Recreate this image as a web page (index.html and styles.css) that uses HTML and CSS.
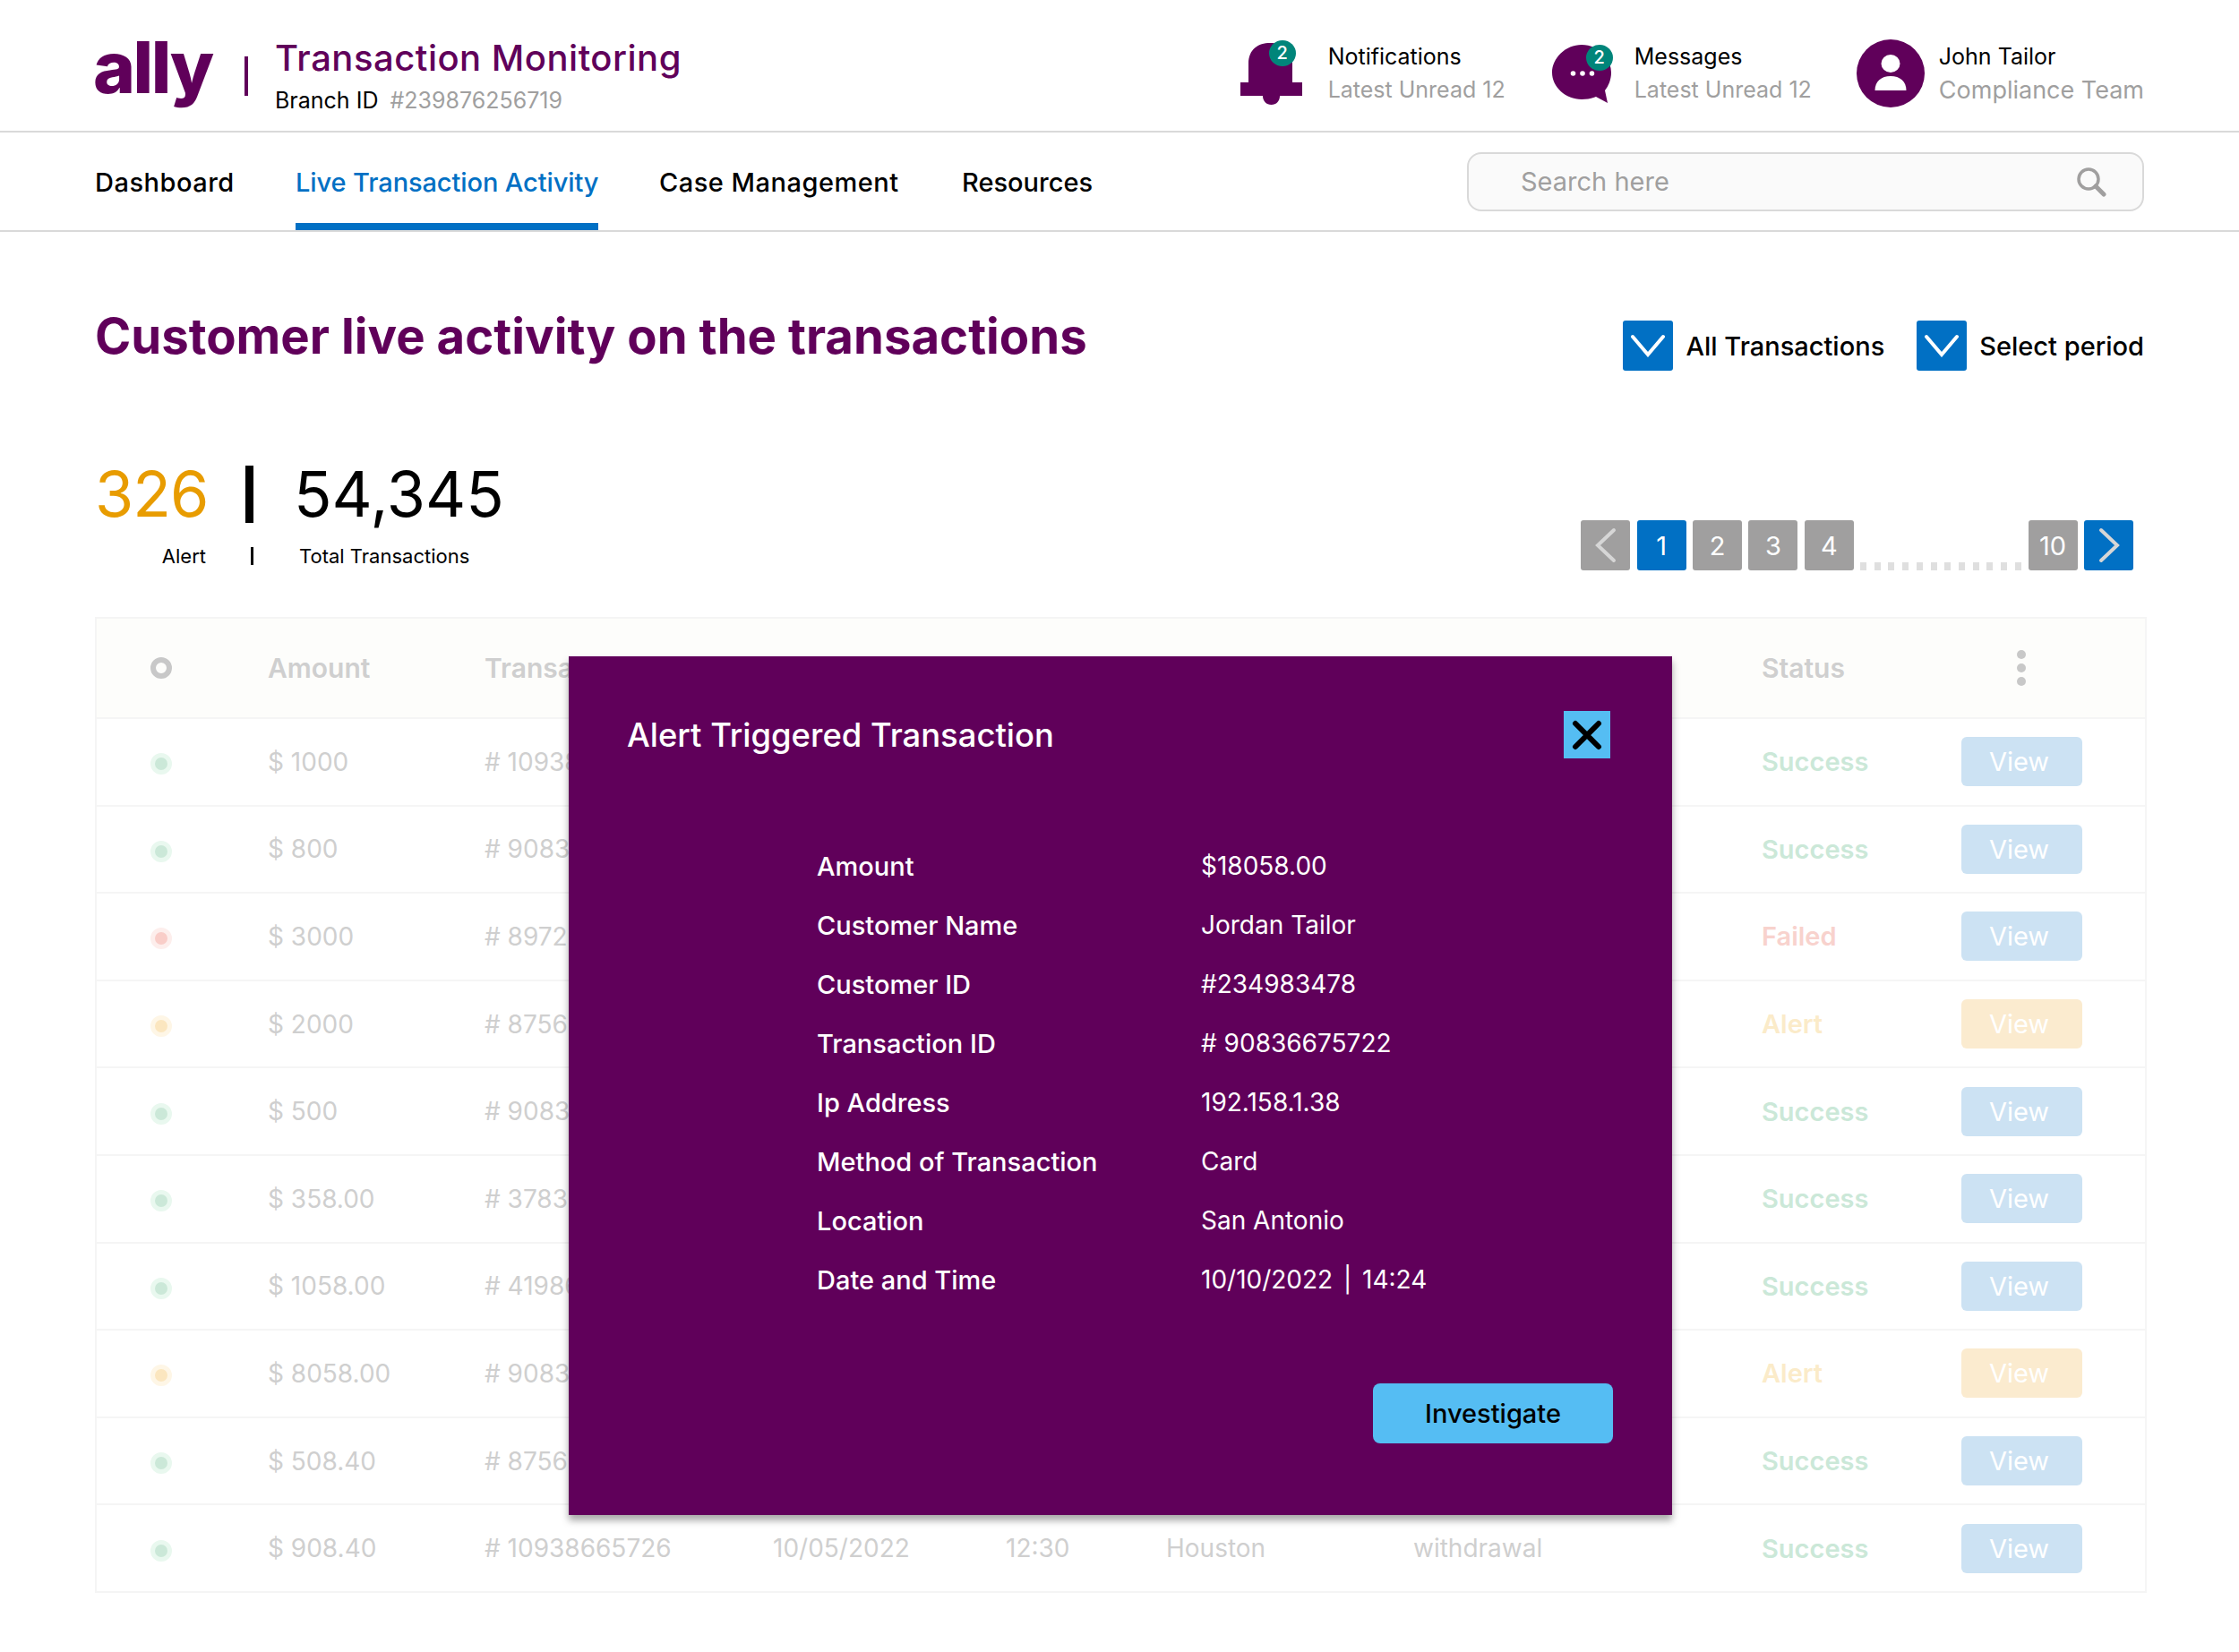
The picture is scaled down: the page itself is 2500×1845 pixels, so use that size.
FILE: index.html
```html
<!DOCTYPE html>
<html>
  <head>
    <meta charset="utf-8" />
    <title>Transaction Monitoring</title>
    <link rel="stylesheet" href="styles.css">
  </head>
  <body>
    <header class="topbar">
      <div class="brand">
        <span class="logo">ally</span>
        <span class="brand-rule"></span>
        <div>
          <div class="brand-title">Transaction Monitoring</div>
          <div class="brand-sub">Branch ID <span class="muted">#239876256719</span></div>
        </div>
      </div>
      <div class="top-items">
        <div class="top-item item-bell">
          <div class="top-icon">
            <svg width="69" height="70" viewBox="0 0 69 70"><path d="M9 45V24C9 8 20 1 33 1s25 7 25 23v21h11v15H0V45z" fill="#60005a"/><path d="M25 60h19c0 6-4 10-9.500 10S25 66 25 60z" fill="#60005a"/></svg>
            <span class="count count-bell">2</span>
          </div>
          <div class="top-text"><div>Notifications</div><div class="muted">Latest Unread 12</div></div>
        </div>
        <div class="top-item item-msg">
          <div class="top-icon">
            <svg width="66" height="65" viewBox="0 0 66 65"><path d="M33 0c18 0 33 14 33 31 0 8-3 15-7 20l3 14-13-7c-5 2-10 3-16 3C15 61 0 47 0 31S15 0 33 0z" fill="#60005a"/><circle cx="23.500" cy="32" r="2.800" fill="#fff"/><circle cx="34" cy="32" r="2.800" fill="#fff"/><circle cx="44.500" cy="32" r="2.800" fill="#fff"/></svg>
            <span class="count count-msg">2</span>
          </div>
          <div class="top-text"><div>Messages</div><div class="muted">Latest Unread 12</div></div>
        </div>
        <div class="top-item item-user">
          <svg width="76" height="76" viewBox="0 0 76 76"><circle cx="38" cy="38" r="38" fill="#60005a"/><ellipse cx="38" cy="27" rx="10.500" ry="10" fill="#fff"/><path d="M20.500 57c0-10 7-16 17.500-16s17.500 6 17.500 16z" fill="#fff"/></svg>
          <div class="top-text"><div>John Tailor</div><div class="muted team">Compliance Team</div></div>
        </div>
      </div>
    </header>

    <nav class="navbar">
      <div class="tabs">
        <a>Dashboard</a>
        <a class="active">Live Transaction Activity</a>
        <a>Case Management</a>
        <a>Resources</a>
      </div>
      <div class="search">
        <span>Search here</span>
        <svg width="34" height="34" viewBox="0 0 34 34" fill="none" stroke="#a09f9f" stroke-width="3.500"><circle cx="14" cy="14" r="11"/><path d="M22 22l9 9" stroke-linecap="round" stroke-width="5"/></svg>
      </div>
    </nav>

    <main class="content">
      <div class="title-row">
        <h1>Customer live activity on the transactions</h1>
        <div class="filters">
          <div class="filter">
            <span class="drop"><svg width="38" height="26" viewBox="0 0 38 26" fill="none" stroke="#fff" stroke-width="4" stroke-linecap="round"><path d="M2 3l17 20L36 3"/></svg></span>
            All Transactions
          </div>
          <div class="filter">
            <span class="drop"><svg width="38" height="26" viewBox="0 0 38 26" fill="none" stroke="#fff" stroke-width="4" stroke-linecap="round"><path d="M2 3l17 20L36 3"/></svg></span>
            Select period
          </div>
        </div>
      </div>

      <div class="stats-row">
        <div class="stats">
          <div class="stat-numbers">
            <span class="num-alert">326</span>
            <span class="num-rule"></span>
            <span class="num-total">54,345</span>
          </div>
          <div class="stat-labels">
            <span class="lab-alert">Alert</span>
            <span class="lab-rule"></span>
            <span class="lab-total">Total Transactions</span>
          </div>
        </div>
        <div class="pager">
          <span class="page"><svg width="26" height="40" viewBox="0 0 26 40" fill="none" stroke="#d6d6d6" stroke-width="4" stroke-linecap="round"><path d="M22 3L4 20l18 17"/></svg></span>
          <span class="page current">1</span>
          <span class="page">2</span>
          <span class="page">3</span>
          <span class="page">4</span>
          <span class="dots"></span>
          <span class="page">10</span>
          <span class="page current"><svg width="26" height="40" viewBox="0 0 26 40" fill="none" stroke="#d6d6d6" stroke-width="4" stroke-linecap="round"><path d="M4 3l18 17L4 37"/></svg></span>
        </div>
      </div>

      <table class="grid">
        <thead>
          <tr>
            <th class="c-dot"><span class="ring"></span></th>
            <th class="c-amount">Amount</th>
            <th class="c-id">Transaction ID</th>
            <th class="c-date"></th>
            <th class="c-time"></th>
            <th class="c-loc"></th>
            <th class="c-type"></th>
            <th class="c-status">Status</th>
            <th class="c-view"><span class="kebab"><i></i><i></i><i></i></span></th>
          </tr>
        </thead>
        <tbody>
          <tr><td><span class="dot ok"></span></td><td>$ 1000</td><td># 10938665726</td><td></td><td></td><td></td><td></td><td class="st-ok">Success</td><td><span class="view">View</span></td></tr>
          <tr><td><span class="dot ok"></span></td><td>$ 800</td><td># 90836675722</td><td></td><td></td><td></td><td></td><td class="st-ok">Success</td><td><span class="view">View</span></td></tr>
          <tr><td><span class="dot bad"></span></td><td>$ 3000</td><td># 89726675722</td><td></td><td></td><td></td><td></td><td class="st-bad">Failed</td><td><span class="view">View</span></td></tr>
          <tr><td><span class="dot warn"></span></td><td>$ 2000</td><td># 87566675722</td><td></td><td></td><td></td><td></td><td class="st-warn">Alert</td><td><span class="view view-warn">View</span></td></tr>
          <tr><td><span class="dot ok"></span></td><td>$ 500</td><td># 90836675722</td><td></td><td></td><td></td><td></td><td class="st-ok">Success</td><td><span class="view">View</span></td></tr>
          <tr><td><span class="dot ok"></span></td><td>$ 358.00</td><td># 37836675722</td><td></td><td></td><td></td><td></td><td class="st-ok">Success</td><td><span class="view">View</span></td></tr>
          <tr><td><span class="dot ok"></span></td><td>$ 1058.00</td><td># 41986675722</td><td></td><td></td><td></td><td></td><td class="st-ok">Success</td><td><span class="view">View</span></td></tr>
          <tr><td><span class="dot warn"></span></td><td>$ 8058.00</td><td># 90836675722</td><td></td><td></td><td></td><td></td><td class="st-warn">Alert</td><td><span class="view view-warn">View</span></td></tr>
          <tr><td><span class="dot ok"></span></td><td>$ 508.40</td><td># 87566675722</td><td></td><td></td><td></td><td></td><td class="st-ok">Success</td><td><span class="view">View</span></td></tr>
          <tr><td><span class="dot ok"></span></td><td>$ 908.40</td><td># 10938665726</td><td>10/05/2022</td><td>12:30</td><td>Houston</td><td>withdrawal</td><td class="st-ok">Success</td><td><span class="view">View</span></td></tr>
        </tbody>
      </table>
    </main>

    <section class="modal">
      <div class="modal-head">
        <h2>Alert Triggered Transaction</h2>
        <span class="close"><svg width="34" height="34" viewBox="0 0 34 34" fill="none" stroke="#000" stroke-width="6" stroke-linecap="round"><path d="M4 4l26 26M30 4L4 30"/></svg></span>
      </div>
      <dl class="fields">
        <dt>Amount</dt><dd>$18058.00</dd>
        <dt>Customer Name</dt><dd>Jordan Tailor</dd>
        <dt>Customer ID</dt><dd>#234983478</dd>
        <dt>Transaction ID</dt><dd># 90836675722</dd>
        <dt>Ip Address</dt><dd>192.158.1.38</dd>
        <dt>Method of Transaction</dt><dd>Card</dd>
        <dt>Location</dt><dd>San Antonio</dd>
        <dt>Date and Time</dt><dd class="when">10/10/2022 &nbsp;|&nbsp; 14:24</dd>
      </dl>
      <div class="modal-foot"><button class="investigate">Investigate</button></div>
    </section>
  </body>
</html>
```

FILE: styles.css
```css
body {
  margin: 0;
  font-family: Inter, 'Noto Sans', sans-serif;
  color: #000;
  background: #fff;
  position: relative;
  height: 1845px;
  overflow: hidden;
}
.muted {
  color: #a09f9f;
}
.topbar {
  display: flex;
  justify-content: space-between;
  align-items: center;
  height: 146px;
  padding: 0 106px;
  border-bottom: 2px solid #d9d9d9;
}
.brand {
  display: flex;
  align-items: center;
  padding-top: 24px;
}
.logo {
  font-size: 80px;
  font-weight: 800;
  letter-spacing: -2.5px;
  line-height: 80px;
  color: #60005a;
  width: 135px;
  margin: -20px 0 0 -2px;
}
.brand-rule {
  width: 4px;
  height: 44px;
  background: #60005a;
  margin: 0 30px 0 34px;
}
.brand-title {
  font-size: 40px;
  font-weight: 500;
  color: #60005a;
  line-height: 50px;
  letter-spacing: 0.5px;
}
.brand-sub {
  font-size: 25px;
  line-height: 36px;
  margin-top: 4px;
}
.brand-sub .muted {
  margin-left: 6px;
}
.top-items {
  display: flex;
  align-items: center;
  padding-top: 18px;
}
.top-item {
  display: flex;
  align-items: center;
  font-size: 25px;
  line-height: 37px;
}
.top-icon {
  position: relative;
}
.top-icon svg {
  display: block;
}
.item-bell .top-icon {
  margin-right: 29px;
}
.item-msg {
  margin-left: 52px;
}
.item-msg .top-icon {
  margin-right: 26px;
}
.item-user {
  margin-left: 50px;
}
.item-user svg {
  margin-right: 16px;
}
.team {
  font-size: 27px;
}
.count {
  position: absolute;
  width: 30px;
  height: 29px;
  border-radius: 50%;
  background: #00857a;
  color: #fff;
  font-size: 20px;
  font-weight: 500;
  line-height: 29px;
  text-align: center;
}
.count-bell {
  top: -2px;
  left: 32px;
}
.count-msg {
  top: 0;
  left: 38px;
}
.navbar {
  display: flex;
  justify-content: space-between;
  align-items: center;
  height: 109px;
  padding: 0 106px;
  border-bottom: 2px solid #d9d9d9;
}
.tabs {
  display: grid;
  grid-template-columns: 156px 338px 270px auto;
  gap: 68px;
  height: 100%;
}
.tabs a {
  display: flex;
  align-items: center;
  font-size: 29px;
  font-weight: 500;
  box-sizing: border-box;
  border-bottom: 8px solid transparent;
  padding-top: 10px;
  white-space: nowrap;
  letter-spacing: 0.5px;
}
.tabs a.active {
  color: #0170c4;
  border-bottom-color: #0170c4;
  letter-spacing: -0.1px;
}
.tabs a:last-child {
  letter-spacing: 0;
}
.search {
  display: flex;
  justify-content: space-between;
  align-items: center;
  box-sizing: border-box;
  width: 756px;
  height: 66px;
  padding: 0 40px 0 58px;
  border: 2px solid #d9d9d9;
  border-radius: 16px;
  background: #fafafa;
  color: #a09f9f;
  font-size: 29px;
}
.content {
  padding: 0 106px;
}
.title-row {
  display: flex;
  justify-content: space-between;
  align-items: center;
  padding-top: 65px;
  height: 102px;
}
h1 {
  margin: 0;
  font-size: 54.5px;
  font-weight: 700;
  color: #60005a;
}
.filters {
  display: flex;
  gap: 36px;
  padding-top: 22px;
}
.filter {
  display: flex;
  align-items: center;
  gap: 14px;
  font-size: 29px;
  font-weight: 500;
}
.drop {
  display: flex;
  justify-content: center;
  align-items: center;
  width: 56px;
  height: 56px;
  background: #0170c4;
  border-radius: 3px;
}
.stats-row {
  display: flex;
  justify-content: space-between;
  align-items: flex-end;
  margin-top: 83px;
  height: 130px;
}
.stat-numbers {
  display: flex;
  align-items: center;
  font-size: 70px;
  line-height: 90px;
}
.num-alert {
  color: #e89c00;
  width: 124px;
  letter-spacing: -1px;
}
.num-rule {
  width: 9px;
  height: 64px;
  background: #000;
  margin: 0 45px 0 44px;
}
.stat-labels {
  display: flex;
  align-items: center;
  font-size: 22px;
  line-height: 36px;
  margin-top: 6px;
}
.lab-alert {
  width: 124px;
  text-align: right;
}
.lab-rule {
  width: 3px;
  height: 20px;
  background: #000;
  margin: 0 51px 0 50px;
}
.pager {
  display: flex;
  align-items: center;
  gap: 7.4px;
  margin-right: 12px;
  margin-bottom: 2px;
}
.page {
  display: flex;
  justify-content: center;
  align-items: center;
  width: 55px;
  height: 56px;
  background: #a09f9f;
  color: #fff;
  font-size: 29px;
  border-radius: 3px;
}
.page.current {
  background: #0170c4;
}
.dots {
  align-self: flex-end;
  width: 180px;
  height: 9px;
  background: repeating-linear-gradient(90deg, #dfdfdf 0 7px, transparent 7px 15.7px);
}
.grid {
  width: 100%;
  border-collapse: collapse;
  table-layout: fixed;
  margin-top: 50px;
  border: 2px solid #f5f5f5;
  font-size: 28px;
  color: #cfcfcf;
  text-align: left;
}
.grid th {
  height: 110px;
  padding: 0;
  background: #fdfdfb;
  font-size: 30px;
  font-weight: 600;
  text-align: left;
  border-bottom: 2px solid #f5f5f5;
  white-space: nowrap;
}
.grid td {
  height: 95.6px;
  padding: 0;
  border-bottom: 2px solid #f5f5f5;
  white-space: nowrap;
}
.c-dot { width: 143px; }
.c-amount { width: 242px; }
.c-id { width: 322px; }
.c-date { width: 260px; }
.c-time { width: 179px; }
.c-loc { width: 276px; }
.c-type { width: 389px; }
.c-status { width: 223px; }
.c-view { width: 205px; }
.grid td:first-child,
.grid th:first-child {
  text-align: center;
  padding-right: 48px;
}
.ring {
  display: inline-block;
  box-sizing: border-box;
  width: 24px;
  height: 24px;
  border: 6px solid #c8c8c8;
  border-radius: 50%;
  vertical-align: middle;
  margin-bottom: 6px;
}
.kebab {
  display: inline-flex;
  flex-direction: column;
  gap: 5px;
  vertical-align: middle;
  margin-left: 62px;
}
.kebab i {
  width: 10px;
  height: 10px;
  border-radius: 50%;
  background: #c8c8c8;
}
.dot {
  display: inline-block;
  width: 14px;
  height: 14px;
  border-radius: 50%;
  border: 5px solid;
  vertical-align: middle;
}
.dot.ok {
  background: #cbe8d8;
  border-color: #e9f8ef;
}
.dot.bad {
  background: #f9cdc8;
  border-color: #fdeeec;
}
.dot.warn {
  background: #fbe6bf;
  border-color: #fef6e6;
}
.st-ok,
.st-bad,
.st-warn {
  font-size: 29px;
  font-weight: 600;
}
.st-ok {
  color: #cbe8d8;
}
.st-bad {
  color: #f8d2cd;
}
.st-warn {
  color: #fbebc9;
}
.view {
  display: inline-block;
  box-sizing: border-box;
  width: 135px;
  height: 55px;
  padding-right: 6px;
  line-height: 55px;
  border-radius: 6px;
  background: #cce2f3;
  color: #fff;
  font-size: 29px;
  text-align: center;
}
.view-warn {
  background: #fbebcf;
}
.modal {
  position: absolute;
  left: 635px;
  top: 733px;
  box-sizing: border-box;
  width: 1232px;
  height: 959px;
  padding: 61px 66px 80px 65px;
  background: #60005a;
  color: #fff;
  box-shadow: 0 6px 8px rgba(0, 0, 0, 0.35);
  display: flex;
  flex-direction: column;
}
.modal-head {
  display: flex;
  justify-content: space-between;
  align-items: center;
}
h2 {
  margin: 0;
  font-size: 36.4px;
  font-weight: 500;
}
.close {
  display: flex;
  justify-content: center;
  align-items: center;
  width: 52px;
  height: 53px;
  margin-right: 3px;
  background: #55bdf3;
}
.fields {
  display: grid;
  grid-template-columns: 429px auto;
  grid-auto-rows: 66px;
  align-items: center;
  margin: 87px 0 0 212px;
  font-size: 28px;
}
.fields dt {
  font-size: 29px;
  font-weight: 500;
}
.fields dd {
  margin: 0;
}
.fields .when {
  word-spacing: -2px;
}
.modal-foot {
  display: flex;
  justify-content: flex-end;
  margin-top: auto;
}
.investigate {
  width: 268px;
  height: 67px;
  border: 0;
  border-radius: 8px;
  background: #55bdf3;
  color: #000;
  font: 500 29px Inter, sans-serif;
}
```
